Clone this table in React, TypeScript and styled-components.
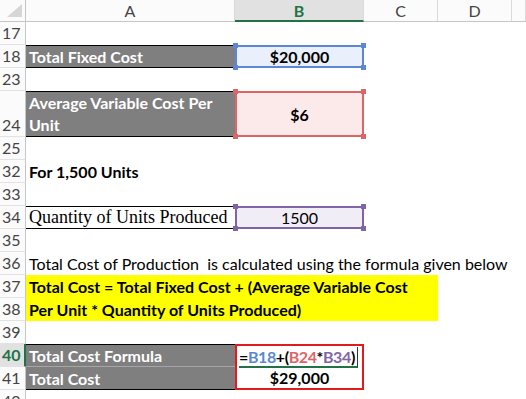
import React from "react";
import styled, { createGlobalStyle } from "styled-components";

const COLS = "26px 209px 129px 74px 74px 1fr";
const GREEN = "#217346";

const GlobalStyle = createGlobalStyle`
  html, body {
    margin: 0;
    padding: 0;
    background: #ffffff;
  }
  body {
    font-family: Lato, "Open Sans", sans-serif;
    font-size: 16px;
    color: #000;
  }
`;

const Sheet = styled.div`
  display: flex;
  flex-direction: column;
  width: 526px;
  height: 399px;
  overflow: hidden;
  background: #fff;
`;

const HeaderRow = styled.div`
  display: grid;
  grid-template-columns: ${COLS};
  height: 22px;
  flex: none;
  box-sizing: border-box;
  border-bottom: 1px solid #c6c6c6;
  background: #fbfbfb;
`;

const Corner = styled.div`
  display: flex;
  align-items: flex-end;
  justify-content: flex-end;
  padding: 0 3px 4px 0;
  border-right: 1px solid #c6c6c6;
`;

const ColHead = styled.div<{ $active?: boolean }>`
  display: flex;
  align-items: center;
  justify-content: center;
  box-sizing: border-box;
  border-right: 1px solid #dadada;
  color: ${(p) => (p.$active ? GREEN : "#444")};
  font-weight: ${(p) => (p.$active ? 700 : 400)};
  background: ${(p) => (p.$active ? "#e1e1e1" : "transparent")};
  border-bottom: ${(p) => (p.$active ? `2px solid ${GREEN}` : "none")};
  margin-bottom: ${(p) => (p.$active ? "-1px" : "0")};
`;

const Row = styled.div<{ $h?: number }>`
  display: grid;
  grid-template-columns: ${COLS};
  grid-template-rows: ${(p) => p.$h ?? 23}px;
  flex: none;
`;

const Block = styled.div`
  display: grid;
  grid-template-columns: ${COLS};
  grid-template-rows: 23px 23px;
  flex: none;
`;

const RowNum = styled.div<{ $active?: boolean; $row?: number }>`
  grid-column: 1;
  grid-row: ${(p) => p.$row ?? 1};
  display: flex;
  align-items: flex-end;
  box-sizing: border-box;
  padding: 0 0 1px 2px;
  line-height: 21px;
  color: ${(p) => (p.$active ? GREEN : "#444")};
  font-weight: ${(p) => (p.$active ? 700 : 400)};
  background: ${(p) => (p.$active ? "#e1e1e1" : "#fbfbfb")};
  border-right: ${(p) => (p.$active ? `2px solid ${GREEN}` : "1px solid #c6c6c6")};
  border-bottom: 1px solid #e2e2e2;
`;

const DarkCell = styled.div<{ $top?: string; $bottom?: string; $wrap?: boolean }>`
  display: flex;
  align-items: ${(p) => (p.$wrap ? "flex-end" : "center")};
  box-sizing: border-box;
  padding: 0 4px 0 3px;
  background: #7f7f7f;
  color: #fff;
  font-weight: 700;
  line-height: 22px;
  border-top: 1px solid ${(p) => p.$top ?? "#000"};
  border-bottom: 1px solid ${(p) => p.$bottom ?? "#000"};
`;

const PlainCell = styled.div<{ $bold?: boolean }>`
  display: flex;
  align-items: center;
  padding-left: 3px;
  font-weight: ${(p) => (p.$bold ? 700 : 400)};
  white-space: pre;
`;

const SpanCell = styled(PlainCell)`
  grid-column: 2 / -1;
`;

const SerifCell = styled.div`
  display: flex;
  align-items: center;
  box-sizing: border-box;
  padding-left: 3px;
  font-family: "Liberation Serif", "Times New Roman", serif;
  font-size: 18px;
  white-space: nowrap;
  border-top: 1px solid #000;
  border-bottom: 1px solid #000;
`;

const RefCell = styled.div<{ $line: string; $fill: string; $bold?: boolean }>`
  position: relative;
  display: flex;
  align-items: center;
  justify-content: center;
  box-sizing: border-box;
  border: 2px solid ${(p) => p.$line};
  background: ${(p) => p.$fill};
  font-weight: ${(p) => (p.$bold ? 700 : 400)};
  z-index: 1;
`;

const Handle = styled.span<{ $color: string; $v: "top" | "bottom"; $h: "left" | "right" }>`
  position: absolute;
  width: 5px;
  height: 5px;
  background: ${(p) => p.$color};
  ${(p) => p.$v}: -4px;
  ${(p) => p.$h}: -4px;
`;

const YellowCell = styled.div`
  grid-column: 2 / 5;
  grid-row: 1 / 3;
  display: flex;
  align-items: center;
  padding-left: 3px;
  background: #ffff00;
  font-weight: 700;
  line-height: 23px;
`;

const FormulaCell = styled.div<{ $first?: boolean }>`
  position: relative;
  display: flex;
  align-items: center;
  justify-content: ${(p) => (p.$first ? "flex-start" : "center")};
  box-sizing: border-box;
  padding-left: ${(p) => (p.$first ? "2px" : "0")};
  font-weight: 700;
  white-space: nowrap;
  border-left: 2px solid #e11b1b;
  border-right: 2px solid #e11b1b;
  border-top: ${(p) => (p.$first ? "2px solid #e11b1b" : "none")};
  border-bottom: ${(p) => (p.$first ? "none" : "2px solid #e11b1b")};
`;

const FormulaText = styled.span`
  display: inline-block;
  white-space: nowrap;
  letter-spacing: -0.4px;
  line-height: 19px;
  padding-right: 2px;
  margin-top: 2px;
  border-bottom: 2px solid ${GREEN};
  border-right: 1px solid #333;
`;

const Ref = styled.span<{ $c: string }>`
  color: ${(p) => p.$c};
`;

const BLUE = "#5b87d6";
const RED = "#de6566";
const PURPLE = "#8064a8";

const Marked: React.FC<{ line: string; fill: string; bold?: boolean; children: React.ReactNode }> = ({
  line,
  fill,
  bold,
  children,
}) => (
  <RefCell $line={line} $fill={fill} $bold={bold}>
    <Handle $color={line} $v="top" $h="left" />
    <Handle $color={line} $v="top" $h="right" />
    <Handle $color={line} $v="bottom" $h="left" />
    <Handle $color={line} $v="bottom" $h="right" />
    {children}
  </RefCell>
);

const App: React.FC = () => {
  return (
    <>
      <GlobalStyle />
      <Sheet>
        <HeaderRow>
          <Corner>
            <svg width="15" height="13" viewBox="0 0 15 13">
              <polygon points="15,0 15,13 0,13" fill="#d6d6d6" />
            </svg>
          </Corner>
          <ColHead>A</ColHead>
          <ColHead $active>B</ColHead>
          <ColHead>C</ColHead>
          <ColHead>D</ColHead>
          <ColHead />
        </HeaderRow>

        <Row>
          <RowNum>17</RowNum>
        </Row>
        <Row>
          <RowNum>18</RowNum>
          <DarkCell>Total Fixed Cost</DarkCell>
          <Marked line={BLUE} fill="#e9effb" bold>
            $20,000
          </Marked>
        </Row>
        <Row>
          <RowNum>23</RowNum>
        </Row>
        <Row $h={46}>
          <RowNum>24</RowNum>
          <DarkCell $wrap>Average Variable Cost Per Unit</DarkCell>
          <Marked line={RED} fill="#fceaea" bold>
            $6
          </Marked>
        </Row>
        <Row>
          <RowNum>25</RowNum>
        </Row>
        <Row>
          <RowNum>32</RowNum>
          <PlainCell $bold>For 1,500 Units</PlainCell>
        </Row>
        <Row>
          <RowNum>33</RowNum>
        </Row>
        <Row>
          <RowNum>34</RowNum>
          <SerifCell>Quantity of Units Produced</SerifCell>
          <Marked line={PURPLE} fill="#f0edf7">
            1500
          </Marked>
        </Row>
        <Row>
          <RowNum>35</RowNum>
        </Row>
        <Row>
          <RowNum>36</RowNum>
          <SpanCell>Total Cost of Production  is calculated using the formula given below</SpanCell>
        </Row>
        <Block>
          <RowNum $row={1}>37</RowNum>
          <RowNum $row={2}>38</RowNum>
          <YellowCell>
            Total Cost = Total Fixed Cost + (Average Variable Cost
            <br />
            Per Unit * Quantity of Units Produced)
          </YellowCell>
        </Block>
        <Row>
          <RowNum>39</RowNum>
        </Row>
        <Row>
          <RowNum $active>40</RowNum>
          <DarkCell $bottom="#a6a6a6">Total Cost Formula</DarkCell>
          <FormulaCell $first>
            <FormulaText>
              =<Ref $c={BLUE}>B18</Ref>+(<Ref $c={RED}>B24</Ref>*<Ref $c={PURPLE}>B34</Ref>)
            </FormulaText>
          </FormulaCell>
        </Row>
        <Row>
          <RowNum>41</RowNum>
          <DarkCell $top="#7f7f7f">Total Cost</DarkCell>
          <FormulaCell>$29,000</FormulaCell>
        </Row>
        <Row>
          <RowNum>42</RowNum>
        </Row>
      </Sheet>
    </>
  );
};

export default App;
